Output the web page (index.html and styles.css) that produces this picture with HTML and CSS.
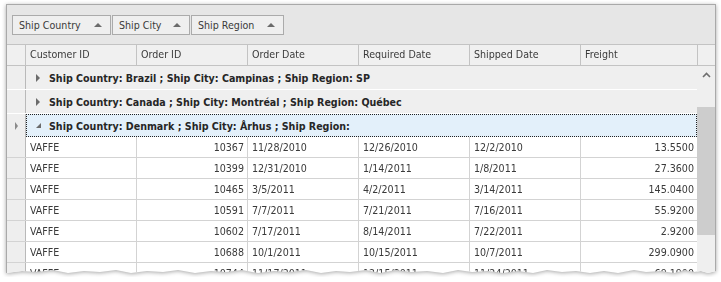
FILE: index.html
```html
<!DOCTYPE html>
<html lang="en">
<head>
  <meta charset="UTF-8">
  <title>Grid Grouping</title>
  <link rel="stylesheet" href="styles.css">
</head>
<body>
  <div class="shot">
    <div class="grid">
      <div class="group-panel">
        <div class="group-item">Ship Country<span class="sort-up"></span></div>
        <div class="group-item city">Ship City<span class="sort-up"></span></div>
        <div class="group-item region">Ship Region<span class="sort-up"></span></div>
      </div>

      <div class="row header-row">
        <div class="cell indicator"></div>
        <div class="cell">Customer ID</div>
        <div class="cell">Order ID</div>
        <div class="cell">Order Date</div>
        <div class="cell">Required Date</div>
        <div class="cell">Shipped Date</div>
        <div class="cell freight">Freight</div>
        <div class="cell corner"></div>
      </div>

      <div class="grid-body">
        <div class="rows">
          <div class="row group-row">
            <div class="cell indicator"></div>
            <div class="group-cell"><span class="expand"></span>Ship Country: Brazil ; Ship City: Campinas ; Ship Region: SP</div>
          </div>
          <div class="row group-row">
            <div class="cell indicator"></div>
            <div class="group-cell"><span class="expand"></span>Ship Country: Canada ; Ship City: Montréal ; Ship Region: Québec</div>
          </div>
          <div class="row group-row focused">
            <div class="cell indicator"><span class="current"></span></div>
            <div class="group-cell"><span class="expand open"></span>Ship Country: Denmark ; Ship City: Århus ; Ship Region:</div>
          </div>

          <div class="row data-row">
            <div class="cell indicator"></div>
            <div class="cell">VAFFE</div>
            <div class="cell num">10367</div>
            <div class="cell">11/28/2010</div>
            <div class="cell">12/26/2010</div>
            <div class="cell">12/2/2010</div>
            <div class="cell num freight">13.5500</div>
          </div>
          <div class="row data-row">
            <div class="cell indicator"></div>
            <div class="cell">VAFFE</div>
            <div class="cell num">10399</div>
            <div class="cell">12/31/2010</div>
            <div class="cell">1/14/2011</div>
            <div class="cell">1/8/2011</div>
            <div class="cell num freight">27.3600</div>
          </div>
          <div class="row data-row">
            <div class="cell indicator"></div>
            <div class="cell">VAFFE</div>
            <div class="cell num">10465</div>
            <div class="cell">3/5/2011</div>
            <div class="cell">4/2/2011</div>
            <div class="cell">3/14/2011</div>
            <div class="cell num freight">145.0400</div>
          </div>
          <div class="row data-row">
            <div class="cell indicator"></div>
            <div class="cell">VAFFE</div>
            <div class="cell num">10591</div>
            <div class="cell">7/7/2011</div>
            <div class="cell">7/21/2011</div>
            <div class="cell">7/16/2011</div>
            <div class="cell num freight">55.9200</div>
          </div>
          <div class="row data-row">
            <div class="cell indicator"></div>
            <div class="cell">VAFFE</div>
            <div class="cell num">10602</div>
            <div class="cell">7/17/2011</div>
            <div class="cell">8/14/2011</div>
            <div class="cell">7/22/2011</div>
            <div class="cell num freight">2.9200</div>
          </div>
          <div class="row data-row">
            <div class="cell indicator"></div>
            <div class="cell">VAFFE</div>
            <div class="cell num">10688</div>
            <div class="cell">10/1/2011</div>
            <div class="cell">10/15/2011</div>
            <div class="cell">10/7/2011</div>
            <div class="cell num freight">299.0900</div>
          </div>
          <div class="row data-row">
            <div class="cell indicator"></div>
            <div class="cell">VAFFE</div>
            <div class="cell num">10744</div>
            <div class="cell">11/17/2011</div>
            <div class="cell">12/15/2011</div>
            <div class="cell">11/24/2011</div>
            <div class="cell num freight">69.1900</div>
          </div>
        </div>

        <div class="scrollbar">
          <svg class="scroll-up" width="9" height="6" viewBox="0 0 9 6">
            <path d="M1 5 L4.5 1.5 L8 5" fill="none" stroke="#6e6e6e" stroke-width="1.6"/>
          </svg>
          <div class="thumb"></div>
        </div>
      </div>
    </div>
  </div>
</body>
</html>
```

FILE: styles.css
```css
body {
  margin: 0;
  background-color: #fff;
  font-family: "DejaVu Sans Condensed", "DejaVu Sans", sans-serif;
  font-size: 10.6px;
  color: #3a3a3a;
}

.shot {
  padding: 4px 0 0 6px;
  filter: drop-shadow(0 1px 2px rgba(0, 0, 0, 0.35));
}

.grid {
  width: 708px;
  height: 272px;
  border: 1px solid #a9a9a9;
  border-bottom: none;
  background-color: #fff;
  overflow: hidden;
  clip-path: polygon(0 0, 100% 0, 100% 267px,
    702px 269px, 695px 267px, 688px 268px, 679px 266px, 668px 269px,
    655px 267px, 640px 268px, 628px 266px, 612px 269px, 598px 267px,
    584px 269px, 570px 267px, 556px 268px, 541px 266px, 527px 269px,
    512px 267px, 497px 269px, 482px 267px, 466px 268px, 452px 266px,
    437px 269px, 421px 267px, 405px 268px, 390px 266px, 374px 269px,
    360px 266px, 344px 268px, 330px 267px, 315px 269px, 300px 266px,
    284px 268px, 268px 267px, 252px 269px, 236px 266px, 220px 268px,
    205px 267px, 189px 269px, 172px 266px, 157px 268px, 141px 267px,
    125px 269px, 110px 266px, 94px 268px, 78px 267px, 62px 269px,
    47px 266px, 31px 268px, 16px 267px, 0 269px);
}

/* group panel */

.group-panel {
  display: flex;
  gap: 1px;
  height: 40px;
  padding: 10px 0 0 5px;
  box-sizing: border-box;
  background-color: #e6e6e6;
  border-bottom: 1px solid #c3c3c3;
}

.group-item {
  display: flex;
  align-items: center;
  width: 99px;
  height: 20px;
  padding-left: 6px;
  box-sizing: border-box;
  background-color: #efefef;
  border: 1px solid #ababab;
}

.group-item.city {
  width: 78px;
}

.group-item.region {
  width: 93px;
}

.sort-up {
  margin-left: auto;
  margin-right: 8px;
  width: 0;
  height: 0;
  border-left: 4px solid transparent;
  border-right: 4px solid transparent;
  border-bottom: 4px solid #6b6b6b;
}

/* rows and cells */

.row {
  display: flex;
}

.cell {
  width: 111px;
  flex: none;
  box-sizing: border-box;
  padding: 0 4px;
  border-right: 1px solid #d3d3d3;
  white-space: nowrap;
  overflow: hidden;
}

.cell.indicator {
  width: 19px;
  padding: 0;
  background-color: #eeeeee;
  border-right: 1px solid #b9b9b9;
  position: relative;
}

.cell.freight {
  width: 117px;
}

.cell.num {
  text-align: right;
  padding-right: 3px;
}

.header-row {
  height: 20px;
  line-height: 19px;
  background-color: #f0f0f0;
  border-bottom: 1px solid #c3c3c3;
}

.header-row .cell {
  border-right-color: #c3c3c3;
}

.header-row .cell.indicator {
  background-color: #f0f0f0;
}

.header-row .cell.corner {
  width: 17px;
  border-right: none;
}

.grid-body {
  display: flex;
}

.rows {
  width: 690px;
}

.group-row {
  height: 24px;
  background-color: #efefef;
  border-bottom: 1px solid #fff;
  box-sizing: border-box;
}

.group-cell {
  flex: 1;
  display: flex;
  align-items: center;
  padding-left: 10px;
  font-weight: bold;
  color: #262626;
  white-space: nowrap;
}

.group-row.focused {
  height: 23px;
  border-bottom: none;
}

.group-row.focused .group-cell {
  background-color: #e3f0fa;
  border: 1px dotted #222;
  padding-left: 9px;
}

.expand {
  width: 0;
  height: 0;
  margin-right: 9px;
  border-top: 4px solid transparent;
  border-bottom: 4px solid transparent;
  border-left: 4px solid #6b6b6b;
}

.expand.open {
  margin-right: 8px;
  border-top: 5px solid transparent;
  border-bottom: none;
  border-left: none;
  border-right: 5px solid #6b6b6b;
}

.current {
  position: absolute;
  left: 8px;
  top: 8px;
  width: 0;
  height: 0;
  border-top: 4px solid transparent;
  border-bottom: 4px solid transparent;
  border-left: 3px solid #8a8a8a;
}

.data-row {
  height: 21px;
  line-height: 20px;
  box-sizing: border-box;
  border-bottom: 1px solid #d3d3d3;
}

.data-row:first-of-type {
  border-top: 1px solid #d3d3d3;
}

.data-row .cell.freight {
  border-right: none;
  width: 116px;
}

/* scrollbar */

.scrollbar {
  width: 18px;
  height: 220px;
  background-color: #efefef;
  position: relative;
}

.scroll-up {
  display: block;
  margin: 6px 0 0 5px;
}

.thumb {
  position: absolute;
  left: 0;
  right: 0;
  top: 41px;
  height: 128px;
  background-color: #cdcdcd;
}
```
